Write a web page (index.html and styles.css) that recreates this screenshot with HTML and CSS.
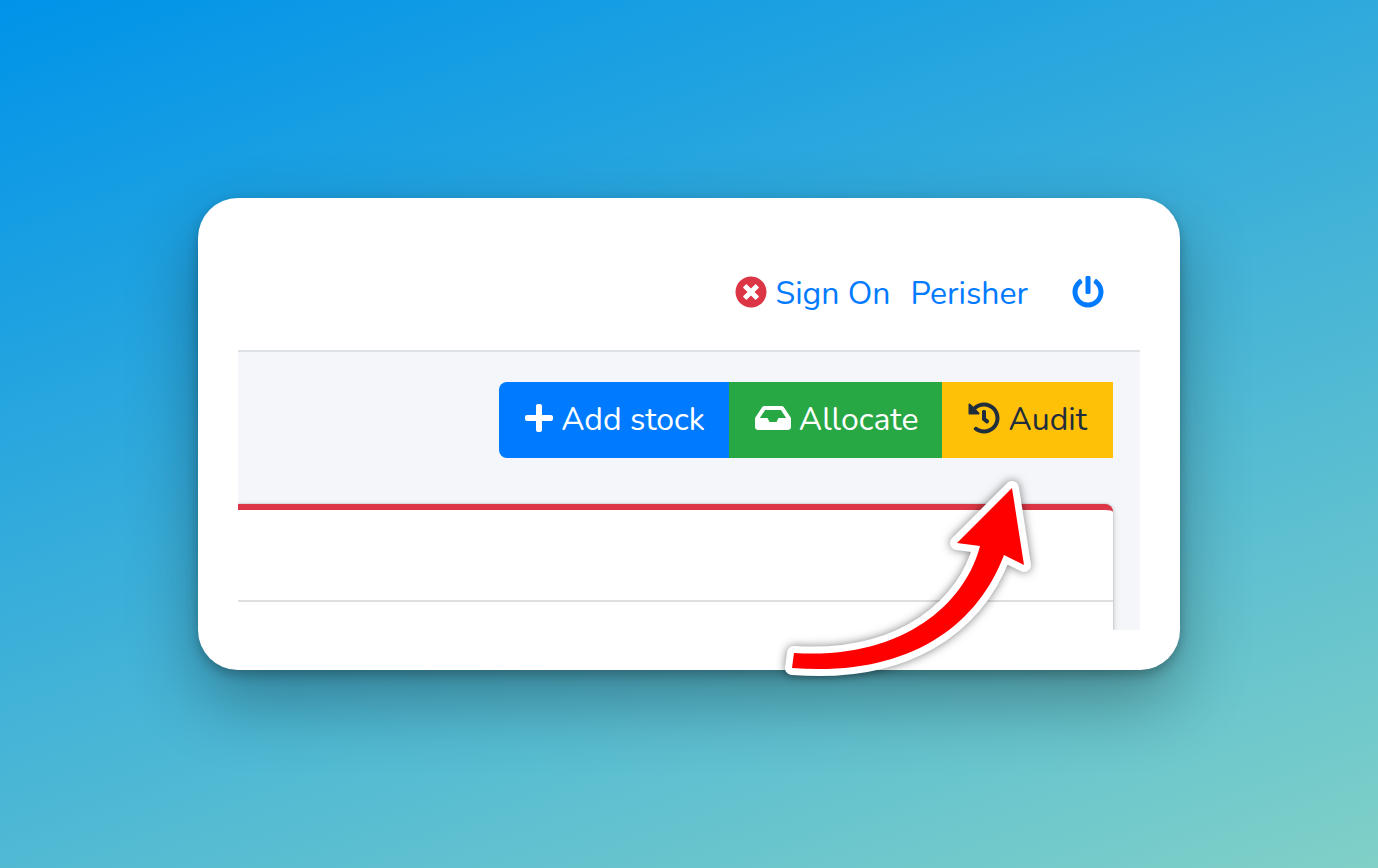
FILE: index.html
```html
<!DOCTYPE html>
<html lang="en">
<head>
<meta charset="utf-8">
<meta name="viewport" content="width=device-width, initial-scale=1">
<title>Stock</title>
<link rel="stylesheet" href="styles.css">
</head>
<body>
<main class="card">
  <header class="topbar">
    <a class="link" href="#signon">
      <svg class="icon danger" viewBox="0 0 512 512" aria-hidden="true"><path d="M256 8C119 8 8 119 8 256s111 248 248 248 248-111 248-248S393 8 256 8zm121.600 313.100c4.700 4.700 4.700 12.300 0 17L338 377.600c-4.700 4.700-12.300 4.700-17 0L256 312l-65.100 65.600c-4.700 4.700-12.300 4.700-17 0L134.400 338c-4.700-4.700-4.700-12.300 0-17l65.600-65-65.600-65.100c-4.700-4.700-4.700-12.300 0-17l39.600-39.600c4.700-4.700 12.300-4.700 17 0l65 65.700 65.100-65.600c4.700-4.700 12.300-4.700 17 0l39.600 39.600c4.700 4.700 4.700 12.300 0 17L312 256l65.600 65.100z"/></svg>
      <span>Sign On</span>
    </a>
    <a class="link" href="#perisher"><span>Perisher</span></a>
    <a class="link power" href="#logout" aria-label="Log out">
      <svg class="icon" viewBox="0 0 512 512" aria-hidden="true"><path d="M400 54.100c63 45 104 118.600 104 201.900 0 136.800-110.800 247.700-247.500 248C120 504.300 8.200 393 8 256.400 7.900 173.100 48.900 99.300 111.800 54.200c11.700-8.300 28-4.800 35 7.700L162.600 90c5.900 10.500 3.100 23.800-6.600 31-41.500 30.800-68 79.600-68 134.900-.1 92.300 74.500 168.100 168 168.100 91.600 0 168.600-74.200 168-169.100-.3-51.800-24.700-101.800-68.100-134-9.700-7.200-12.400-20.500-6.500-30.900l15.800-28.100c7-12.400 23.200-16.100 34.800-7.800zM296 264V24c0-13.300-10.700-24-24-24h-32c-13.300 0-24 10.700-24 24v240c0 13.300 10.700 24 24 24h32c13.300 0 24-10.700 24-24z"/></svg>
    </a>
  </header>
  <section class="content">
    <div class="actions">
      <button class="btn add" type="button">
        <svg class="icon plus" viewBox="0 0 448 512" aria-hidden="true"><path d="M416 208H272V64c0-17.670-14.330-32-32-32h-32c-17.670 0-32 14.330-32 32v144H32c-17.670 0-32 14.330-32 32v32c0 17.670 14.330 32 32 32h144v144c0 17.670 14.330 32 32 32h32c17.670 0 32-14.330 32-32V304h144c17.670 0 32-14.330 32-32v-32c0-17.670-14.330-32-32-32z"/></svg>
        <span>Add stock</span>
      </button>
      <button class="btn allocate" type="button">
        <svg class="icon inbox" viewBox="0 0 576 512" aria-hidden="true"><path d="M567.938 243.908L462.250 85.374A48.003 48.003 0 0 0 422.311 64H153.689a48 48 0 0 0-39.938 21.374L8.062 243.908A47.994 47.994 0 0 0 0 270.533V400c0 26.510 21.490 48 48 48h480c26.510 0 48-21.490 48-48V270.533a47.994 47.994 0 0 0-8.062-26.625zM162.252 128h251.497l85.333 128H376l-32 64H232l-32-64H76.918l85.334-128z"/></svg>
        <span>Allocate</span>
      </button>
      <button class="btn audit" type="button">
        <svg class="icon" viewBox="0 0 512 512" aria-hidden="true"><path d="M504 255.531c.253 136.640-111.180 248.372-247.820 248.468-59.015.042-113.223-20.530-155.822-54.911-11.077-8.940-11.905-25.541-1.839-35.607l11.267-11.267c8.609-8.609 22.353-9.551 31.891-1.984C173.062 425.135 212.781 440 256 440c101.705 0 184-82.311 184-184 0-101.705-82.311-184-184-184-48.814 0-93.149 18.969-126.068 49.932l50.754 50.754c10.080 10.080 2.941 27.314-11.313 27.314H24c-8.837 0-16-7.163-16-16V38.627c0-14.254 17.234-21.393 27.314-11.314l49.372 49.372C129.209 34.136 189.552 8 256 8c136.810 0 247.747 110.780 248 247.531zm-180.912 78.784l9.823-12.630c8.138-10.463 6.253-25.542-4.210-33.679L288 256.349V152c0-13.255-10.745-24-24-24h-16c-13.255 0-24 10.745-24 24v135.651l65.409 50.874c10.463 8.137 25.541 6.253 33.679-4.210z"/></svg>
        <span>Audit</span>
      </button>
    </div>
    <div class="panel">
      <div class="panel-head"></div>
      <div class="panel-body"></div>
    </div>
  </section>
  <svg class="arrow" viewBox="780 470 260 220" aria-hidden="true"><path d="M1012 488L957 543L980 546C966 601 906 660 794 653L792 668C905 677 976 629 1004 555L1024 565Z"/></svg>
</main>
</body>
</html>
```
FILE: styles.css
```css
* {
  box-sizing: border-box;
}

body {
  margin: 0;
  min-height: 100vh;
  padding: 198px;
  background: linear-gradient(160deg, #0093e9 0%, #80d0c7 100%);
  font-family: Nunito, Lato, sans-serif;
  font-size: 32px;
  line-height: 48px;
}

.card {
  position: relative;
  padding: 40px;
  background: #fff;
  border-radius: 40px;
  box-shadow: 0 5px 12px rgba(0, 0, 0, 0.25), 0 30px 70px rgba(0, 0, 0, 0.32);
}

.topbar {
  display: flex;
  flex-wrap: wrap;
  align-items: center;
  justify-content: flex-end;
  gap: 20px;
  min-height: 114px;
  padding: 0 36px 0 0;
  border-bottom: 2px solid #dee2e6;
}

.link {
  display: flex;
  align-items: center;
  gap: 8px;
  color: #007bff;
  text-decoration: none;
}

.power {
  margin-left: 24px;
}

.icon {
  width: 32px;
  height: 32px;
  flex: none;
  margin-bottom: 4px;
  fill: currentColor;
}

.danger {
  color: #dc3545;
}

.plus {
  width: 28px;
}

.inbox {
  width: 36px;
}

.content {
  padding: 30px 27px 0 0;
  background: #f4f6f9;
  overflow: hidden;
}

.actions {
  display: flex;
  justify-content: flex-end;
  margin-bottom: 46px;
}

.btn {
  display: flex;
  align-items: center;
  gap: 8px;
  padding: 14px 26px;
  border: 0;
  color: #fff;
  font: inherit;
}

.btn + .btn {
  margin-left: -2px;
}

.add {
  background: #007bff;
  border-radius: 8px 0 0 8px;
}

.allocate {
  background: #28a745;
}

.audit {
  background: #ffc107;
  color: #1f2d3d;
}

.panel {
  background: #fff;
  border-top: 6px solid #dc3545;
  border-top-right-radius: 8px;
  box-shadow: 0 0 2px rgba(0, 0, 0, 0.25), 0 2px 6px rgba(0, 0, 0, 0.2);
}

.panel-head {
  height: 92px;
  border-bottom: 2px solid #dfdfdf;
}

.panel-body {
  height: 28px;
}

.arrow {
  position: absolute;
  right: 140px;
  bottom: -20px;
  width: 260px;
  height: 220px;
  overflow: visible;
  fill: #f00;
  stroke: #fff;
  stroke-width: 14px;
  stroke-linejoin: round;
  paint-order: stroke;
  filter: drop-shadow(0 0 5px rgba(0, 0, 0, 0.5));
}
```
